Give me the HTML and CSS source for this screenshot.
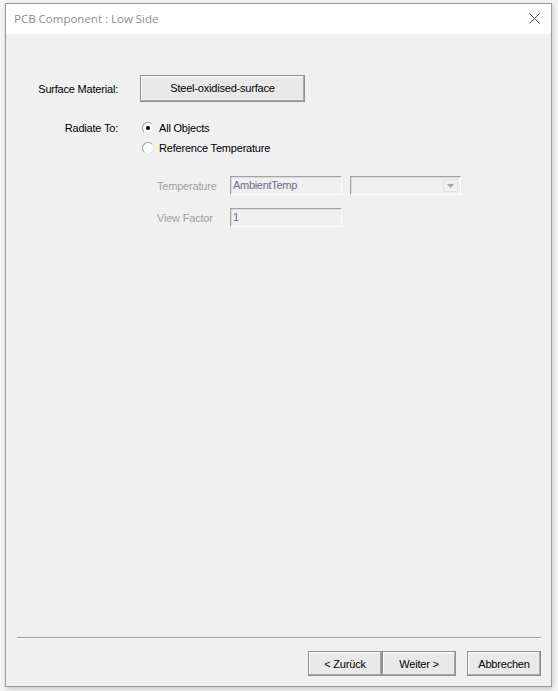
FILE: index.html
```html
<!DOCTYPE html>
<html>
<head>
<meta charset="utf-8">
<link rel="stylesheet" href="styles.css">
</head>
<body>
<div class="window">
  <div class="titlebar">
    <span class="title">PCB Component : Low Side</span>
    <svg class="close" width="11" height="11" viewBox="0 0 11 11"><path d="M0.5 0.5 L10.5 10.5 M10.5 0.5 L0.5 10.5" stroke="#5a5a5a" stroke-width="1" fill="none"/></svg>
  </div>
  <div class="content">
    <div class="row row-material">
      <span class="label">Surface Material:</span>
      <button class="btn btn-material">Steel-oxidised-surface</button>
    </div>
    <div class="row row-radiate">
      <span class="label">Radiate To:</span>
      <div class="radios">
        <div class="radio-item"><span class="radio checked"></span><span>All Objects</span></div>
        <div class="radio-item"><span class="radio"></span><span>Reference Temperature</span></div>
      </div>
    </div>
    <div class="fields">
      <div class="field">
        <span class="flabel">Temperature</span>
        <span class="input">AmbientTemp</span>
        <span class="select"><span class="arrow"><svg width="7" height="4" viewBox="0 0 7 4"><path d="M0 0 H7 L3.5 4 Z" fill="#a8a8a8"/></svg></span></span>
      </div>
      <div class="field">
        <span class="flabel">View Factor</span>
        <span class="input">1</span>
      </div>
    </div>
    <div class="spacer"></div>
    <div class="separator"></div>
    <div class="footer">
      <button class="btn btn-foot">&lt; Zurück</button>
      <button class="btn btn-foot">Weiter &gt;</button>
      <button class="btn btn-foot btn-cancel">Abbrechen</button>
    </div>
  </div>
</div>
</body>
</html>
```
FILE: styles.css
```css
html, body {
  margin: 0;
  padding: 0;
}
body {
  width: 558px;
  height: 691px;
  background: #f4f4f4;
  font-family: "Liberation Sans", Arial, sans-serif;
  font-size: 11px;
  letter-spacing: -0.2px;
  color: #000;
  overflow: hidden;
}
.window {
  margin: 3px 0 0 5px;
  width: 545px;
  height: 682px;
  border: 1px solid #9b9b9b;
  box-shadow: 1px 2px 5px rgba(0,0,0,0.18);
  background: #f0f0f0;
  display: flex;
  flex-direction: column;
}
.titlebar {
  height: 30px;
  background: #fff;
  display: flex;
  align-items: center;
  justify-content: space-between;
  padding: 0 11px 0 8px;
  flex: none;
}
.title {
  font-family: "Open Sans", "Noto Sans", sans-serif;
  font-size: 11.5px;
  letter-spacing: 0;
  color: #8c8c8c;
  margin-top: -2px;
}
.close {
  display: block;
  margin-top: -1px;
}
.content {
  flex: 1;
  display: flex;
  flex-direction: column;
  background: #f0f0f0;
}
.row {
  display: flex;
}
.label {
  width: 112px;
  text-align: right;
  flex: none;
}
.row-material {
  margin-top: 41px;
  align-items: center;
  height: 27px;
}
.btn {
  font-family: "Liberation Sans", Arial, sans-serif;
  font-size: 11px;
  letter-spacing: -0.2px;
  color: #000;
  background: #e9e9e9;
  border: 1px solid #8f8f8f;
  box-shadow: inset -1px -1px 0 #a8a8a8, inset 1px 1px 0 #fdfdfd;
  padding: 0;
  margin: 0;
}
.btn-material {
  margin-left: 22px;
  width: 165px;
  height: 27px;
  padding-bottom: 2px;
}
.row-radiate {
  margin-top: 16px;
}
.row-radiate .label {
  line-height: 20px;
}
.radios {
  margin-left: 24px;
  display: flex;
  flex-direction: column;
}
.radio-item {
  height: 20px;
  display: flex;
  align-items: center;
}
.radio {
  width: 10px;
  height: 10px;
  border-radius: 50%;
  border: 1px solid #9a9a9a;
  border-right-color: #e8e8e8;
  border-bottom-color: #e8e8e8;
  background: #fff;
  margin-right: 5px;
  margin-top: -1px;
  position: relative;
  box-sizing: content-box;
}
.radio.checked::after {
  content: "";
  position: absolute;
  left: 3px;
  top: 3px;
  width: 4px;
  height: 4px;
  border-radius: 50%;
  background: #000;
}
.fields {
  margin-top: 18px;
  margin-left: 151px;
  display: flex;
  flex-direction: column;
  gap: 13px;
}
.field {
  display: flex;
  align-items: center;
  height: 19px;
}
.flabel {
  width: 73px;
  color: #a0a0a0;
  flex: none;
}
.input {
  box-sizing: border-box;
  width: 112px;
  height: 19px;
  border: 1px solid;
  border-color: #a3a3a3 #fcfcfc #fcfcfc #a3a3a3;
  box-shadow: inset 1px 1px 0 #dcdcdc;
  background: #f0f0f0;
  color: #6d6d86;
  padding: 0 0 0 2px;
  line-height: 16px;
  letter-spacing: -0.3px;
}
.select {
  box-sizing: border-box;
  margin-left: 8px;
  width: 111px;
  height: 19px;
  border: 1px solid;
  border-color: #a3a3a3 #fcfcfc #fcfcfc #a3a3a3;
  box-shadow: inset 1px 1px 0 #dcdcdc;
  background: #f0f0f0;
  display: flex;
  justify-content: flex-end;
  align-items: stretch;
  padding: 2px;
}
.arrow {
  width: 13px;
  background: #f0f0f0;
  border: 1px solid #e2e2e2;
  display: flex;
  align-items: center;
  justify-content: center;
}
.spacer {
  flex: 1;
}
.separator {
  margin: 0 10px 0 11px;
  height: 1px;
  background: #a0a0a0;
  border-bottom: 1px solid #fff;
}
.footer {
  display: flex;
  justify-content: flex-end;
  padding: 12px 10px 10px 0;
  height: 25px;
}
.btn-foot {
  width: 74px;
  height: 25px;
}
.btn-cancel {
  margin-left: 11px;
}
```
